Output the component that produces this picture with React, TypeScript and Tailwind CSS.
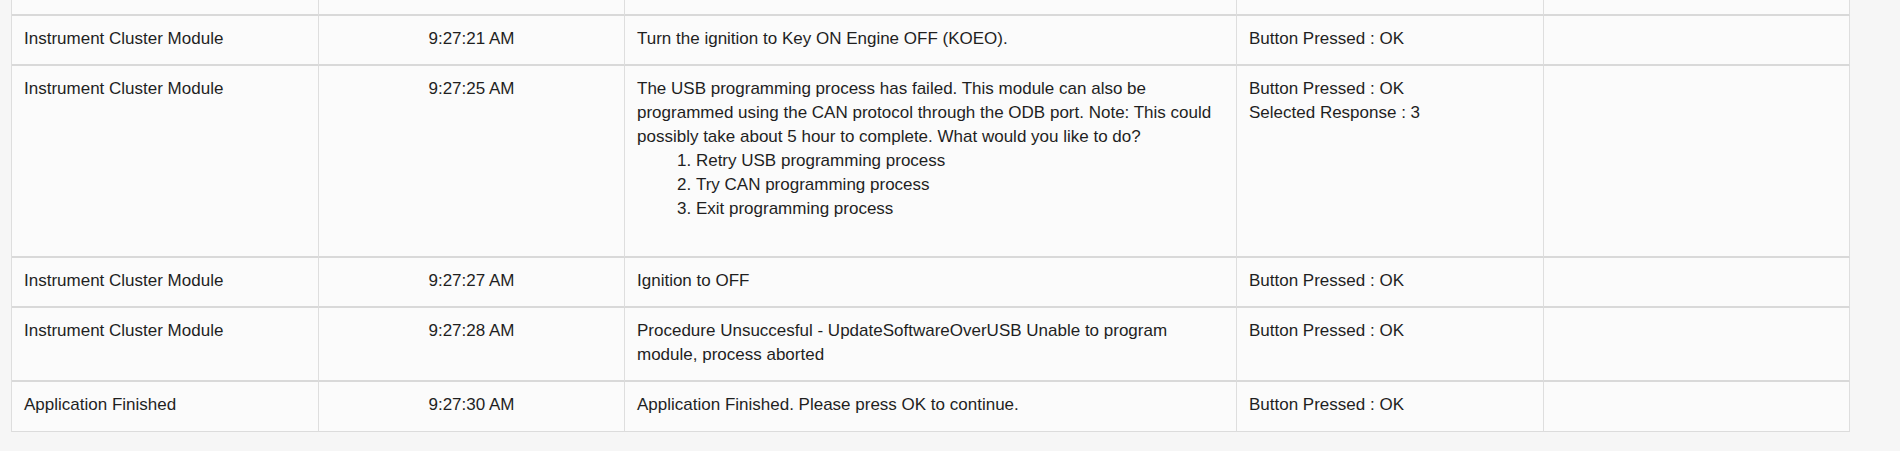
const rows = [
  {
    source: "Instrument Cluster Module",
    time: "9:27:21 AM",
    message: "Turn the ignition to Key ON Engine OFF (KOEO).",
    response: ["Button Pressed : OK"],
  },
  {
    source: "Instrument Cluster Module",
    time: "9:27:25 AM",
    message:
      "The USB programming process has failed. This module can also be programmed using the CAN protocol through the ODB port. Note: This could possibly take about 5 hour to complete. What would you like to do?",
    options: [
      "Retry USB programming process",
      "Try CAN programming process",
      "Exit programming process",
    ],
    response: ["Button Pressed : OK", "Selected Response : 3"],
  },
  {
    source: "Instrument Cluster Module",
    time: "9:27:27 AM",
    message: "Ignition to OFF",
    response: ["Button Pressed : OK"],
  },
  {
    source: "Instrument Cluster Module",
    time: "9:27:28 AM",
    message: "Procedure Unsuccesful - UpdateSoftwareOverUSB Unable to program module, process aborted",
    response: ["Button Pressed : OK"],
  },
  {
    source: "Application Finished",
    time: "9:27:30 AM",
    message: "Application Finished. Please press OK to continue.",
    response: ["Button Pressed : OK"],
  },
]

const cell = "align-top border-r border-[#dedede] px-3 pt-[11px]"

export default function App() {
  return (
    <div
      className="min-h-[451px] w-full bg-[#f6f6f6] text-[17px] leading-6 text-[#1f1f1f]"
      style={{ fontFamily: '"Liberation Sans", Arial, sans-serif' }}
    >
      <table className="ml-[11px] w-[1839px] table-fixed border-separate border-spacing-0 border-l border-[#dedede] bg-[#fbfbfb]">
        <colgroup>
          <col className="w-[307px]" />
          <col className="w-[306px]" />
          <col className="w-[612px]" />
          <col className="w-[307px]" />
          <col className="w-[306px]" />
        </colgroup>
        <tbody>
          {/* tail of the row above, cut off by the viewport */}
          <tr className="h-[16px]">
            {[0, 1, 2, 3, 4].map((i) => (
              <td key={i} className="border-r border-b-2 border-[#dedede] border-b-[#d9d9d9] p-0" />
            ))}
          </tr>
          {rows.map((row, idx) => {
            const last = idx === rows.length - 1
            const rowBorder = last
              ? "border-b border-b-[#dcdcdc] pb-[14px]"
              : "border-b-2 border-b-[#d9d9d9] pb-[13px]"
            return (
              <tr key={row.time}>
                <td className={`${cell} ${rowBorder}`}>{row.source}</td>
                <td className={`${cell} ${rowBorder} text-center`}>{row.time}</td>
                <td className={`${cell} ${rowBorder}`}>
                  <div>{row.message}</div>
                  {row.options && (
                    <ol className="mb-[22px] list-inside list-decimal pl-10">
                      {row.options.map((o) => (
                        <li key={o}>{o}</li>
                      ))}
                    </ol>
                  )}
                </td>
                <td className={`${cell} ${rowBorder}`}>
                  {row.response.map((r) => (
                    <div key={r}>{r}</div>
                  ))}
                </td>
                <td className={`${cell} ${rowBorder}`} />
              </tr>
            )
          })}
        </tbody>
      </table>
    </div>
  )
}
